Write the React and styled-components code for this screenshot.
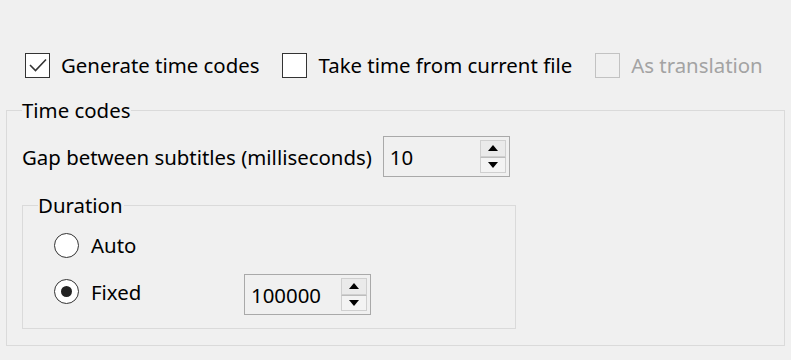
import React from 'react';
import styled, { createGlobalStyle } from 'styled-components';

const GlobalStyle = createGlobalStyle`
    html, body {
        margin: 0;
        padding: 0;
        background: #f0f0f0;
    }
    body {
        font-family: "Noto Sans", "Liberation Sans", sans-serif;
        font-size: 20.4px;
        color: #000;
    }
`;

const Page = styled.div`
    width: 791px;
    height: 360px;
    box-sizing: border-box;
    padding: 52px 6px 0 6px;
    overflow: hidden;
`;

const OptionsRow = styled.div`
    display: flex;
    align-items: center;
    gap: 23px;
    padding-left: 19px;
    height: 26px;
`;

const CheckItem = styled.label`
    display: flex;
    align-items: center;
    gap: 11px;
    color: ${props => props.disabled ? '#a3a3a3' : '#000'};
    white-space: nowrap;
`;

const CheckBox = styled.span`
    width: 25px;
    height: 25px;
    box-sizing: border-box;
    border: 1.5px solid ${props => props.disabled ? '#c2c2c2' : '#333'};
    background: ${props => props.disabled ? '#f0f0f0' : '#fff'};
    display: grid;
    place-content: center;
`;

const GroupBox = styled.fieldset`
    margin: ${props => props.inner ? '18px 0 0 0' : '22px 0 0 0'};
    padding: 0 15px;
    border: 1.5px solid #dadada;
    border-radius: 0;
    width: ${props => props.width || 'auto'};
    box-sizing: border-box;
    height: ${props => props.height || 'auto'};
`;

const Legend = styled.legend`
    padding: 0 1px 0 0;
    line-height: 20px;
    height: 20px;
`;

const FieldRow = styled.div`
    display: flex;
    align-items: center;
    gap: ${props => props.gap || 15}px;
    margin-top: ${props => props.top || 0}px;
`;

const SpinBox = styled.div`
    width: 127px;
    height: 41px;
    box-sizing: border-box;
    border: 1.5px solid #a9a9a9;
    background: #f0f0f0;
    display: flex;
    align-items: stretch;
    padding: 3px 3px 3px 6px;
`;

const SpinValue = styled.span`
    flex: 1;
    display: flex;
    align-items: center;
`;

const SpinButtons = styled.div`
    width: 26px;
    display: flex;
    flex-direction: column;
`;

const SpinButton = styled.span`
    flex: 1;
    border: 1px solid #cfcfcf;
    background: ${props => props.down ? '#f3f3f3' : '#eaeaea'};
    display: grid;
    place-content: center;
    & + & {
        border-top-color: #bdbdbd;
    }
`;

const RadioList = styled.div`
    display: flex;
    flex-direction: column;
    gap: 15px;
    padding: 16px 0 0 16px;
`;

const RadioItem = styled.label`
    display: flex;
    align-items: center;
    gap: 12px;
    width: ${props => props.width || 'auto'};
    margin-bottom: ${props => props.raise || 0}px;
`;

const RadioCircle = styled.span`
    width: 25px;
    height: 25px;
    box-sizing: border-box;
    border-radius: 50%;
    border: 1.5px solid #333;
    background: #fff;
    display: grid;
    place-content: center;
    &::after {
        content: '';
        display: ${props => props.checked ? 'block' : 'none'};
        width: 11px;
        height: 11px;
        border-radius: 50%;
        background: #222;
    }
`;

const CheckMark = () => (
    <svg width="20" height="16" viewBox="0 0 20 16">
        <path d="M2 8 L7.5 13.5 L18 2.5" fill="none" stroke="#333" strokeWidth="1.6" />
    </svg>
);

const Arrow = ({ down }) => (
    <svg width="10" height="6" viewBox="0 0 10 6">
        <path d={down ? 'M0 0 H10 L5 6 Z' : 'M5 0 L10 6 H0 Z'} fill="#000" />
    </svg>
);

const Spinner = ({ value }) => (
    <SpinBox>
        <SpinValue>{ value }</SpinValue>
        <SpinButtons>
            <SpinButton><Arrow /></SpinButton>
            <SpinButton down><Arrow down /></SpinButton>
        </SpinButtons>
    </SpinBox>
);

const App = () => (
    <>
        <GlobalStyle />
        <Page>
            <OptionsRow>
                <CheckItem>
                    <CheckBox><CheckMark /></CheckBox>
                    Generate time codes
                </CheckItem>
                <CheckItem>
                    <CheckBox />
                    Take time from current file
                </CheckItem>
                <CheckItem disabled>
                    <CheckBox disabled />
                    As translation
                </CheckItem>
            </OptionsRow>

            <GroupBox height="246px">
                <Legend>Time codes</Legend>
                <FieldRow top={16} gap={11}>
                    <span>Gap between subtitles (milliseconds)</span>
                    <Spinner value="10" />
                </FieldRow>

                <GroupBox inner width="494px" height="134px">
                    <Legend>Duration</Legend>
                    <RadioList>
                        <RadioItem>
                            <RadioCircle />
                            Auto
                        </RadioItem>
                        <FieldRow>
                            <RadioItem width="175px" raise={6}>
                                <RadioCircle checked />
                                Fixed
                            </RadioItem>
                            <Spinner value="100000" />
                        </FieldRow>
                    </RadioList>
                </GroupBox>
            </GroupBox>
        </Page>
    </>
);

export default App;
